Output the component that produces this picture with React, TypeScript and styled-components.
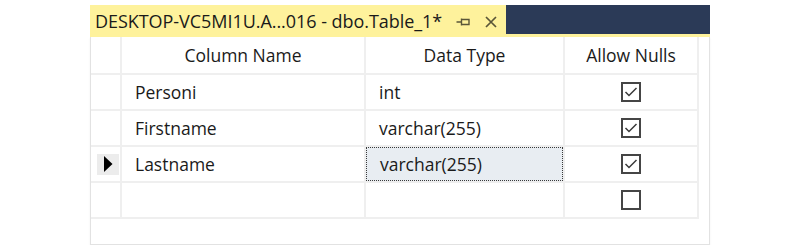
import React from 'react';
import styled, { createGlobalStyle } from 'styled-components';

const GlobalStyle = createGlobalStyle`
  body {
    margin: 0;
    background: #ffffff;
    font-family: "Open Sans", "Noto Sans", sans-serif;
    color: #1a1a1a;
  }
`;

const Frame = styled.div`
  width: 620px;
  margin: 5px 0 0 90px;
`;

const TabStrip = styled.div`
  display: flex;
  height: 29px;
  background: #2b3a57;
  border-bottom: 3px solid #fef29c;
`;

const Tab = styled.div`
  display: flex;
  align-items: center;
  width: 416px;
  height: 32px;
  box-sizing: border-box;
  padding-left: 5px;
  background: #fef29c;
  font-size: 18px;
  white-space: nowrap;
`;

const TabTitle = styled.span`
  letter-spacing: -0.05px;
`;

const TabButton = styled.span<{ $gap: number }>`
  display: inline-flex;
  margin-left: ${p => p.$gap}px;
  margin-top: 2px;
`;

const Panel = styled.div`
  border: 1px solid #e2e2e2;
  border-top: none;
  box-shadow: 0 1px 2px rgba(0, 0, 0, 0.06);
  padding: 0 12px 25px 0;
  background: #fff;
`;

const Grid = styled.div`
  display: grid;
  grid-template-columns: 29px 242px 197px 132px;
  grid-template-rows: 36px;
  grid-auto-rows: 34px;
  gap: 2px;
  padding: 0 2px 2px 0;
  background: #efefef;
  width: max-content;
`;

const HeaderCell = styled.div`
  display: flex;
  align-items: center;
  justify-content: center;
  background: #fff;
  font-size: 17.5px;
`;

const Cell = styled.div<{ $selected?: boolean; $center?: boolean }>`
  display: flex;
  align-items: center;
  justify-content: ${p => (p.$center ? 'center' : 'flex-start')};
  box-sizing: border-box;
  padding-left: ${p => (p.$center ? 0 : 13)}px;
  background: ${p => (p.$selected ? '#e8edf2' : '#fff')};
  border: ${p => (p.$selected ? '1px dotted #3a3a3a' : 'none')};
  font-size: 17.5px;
  white-space: nowrap;
`;

const SelectorCell = styled.div`
  display: flex;
  align-items: center;
  justify-content: center;
  background: #fff;
`;

const Marker = styled.div`
  display: flex;
  align-items: center;
  justify-content: center;
  width: 22px;
  height: 21px;
  margin-left: 4px;
  background: #ececec;
`;

const Box = styled.span`
  display: inline-flex;
  align-items: center;
  justify-content: center;
  width: 20px;
  height: 20px;
  box-sizing: border-box;
  border: 2px solid #454545;
  background: #fff;
`;

const Check = ({ checked }: { checked: boolean }) => (
  <Box>
    {checked && (
      <svg width="14" height="12" viewBox="0 0 14 12">
        <path d="M1.5 6 L5 9.5 L12.5 2" fill="none" stroke="#3a3a3a" strokeWidth="1.5" />
      </svg>
    )}
  </Box>
);

const rows = [
  { name: 'Personi', type: 'int', nulls: true },
  { name: 'Firstname', type: 'varchar(255)', nulls: true },
  { name: 'Lastname', type: 'varchar(255)', nulls: true, current: true },
];

export default function App() {
  return (
    <>
      <GlobalStyle />
      <Frame>
        <TabStrip>
          <Tab>
            <TabTitle>DESKTOP-VC5MI1U.A...016 - dbo.Table_1*</TabTitle>
            <TabButton $gap={14}>
              <svg width="14" height="10" viewBox="0 0 14 10">
                <path d="M0.5 5 H5 M5.5 1.5 V8.5 M5.5 2.5 H13 V7.5 H5.5" fill="none" stroke="#5a5638" strokeWidth="1.4" />
              </svg>
            </TabButton>
            <TabButton $gap={15}>
              <svg width="12" height="12" viewBox="0 0 12 12">
                <path d="M1 1 L11 11 M11 1 L1 11" fill="none" stroke="#5a5638" strokeWidth="1.7" />
              </svg>
            </TabButton>
          </Tab>
        </TabStrip>
        <Panel>
          <Grid>
            <HeaderCell />
            <HeaderCell>Column Name</HeaderCell>
            <HeaderCell>Data Type</HeaderCell>
            <HeaderCell>Allow Nulls</HeaderCell>
            {rows.map(r => (
              <React.Fragment key={r.name}>
                <SelectorCell>
                  {r.current && (
                    <Marker>
                      <svg width="10" height="16" viewBox="0 0 10 16">
                        <path d="M1 0 L9.5 8 L1 16 Z" fill="#000" />
                      </svg>
                    </Marker>
                  )}
                </SelectorCell>
                <Cell>{r.name}</Cell>
                <Cell $selected={r.current}>{r.type}</Cell>
                <Cell $center>
                  <Check checked={r.nulls} />
                </Cell>
              </React.Fragment>
            ))}
            <SelectorCell />
            <Cell />
            <Cell />
            <Cell $center>
              <Check checked={false} />
            </Cell>
          </Grid>
        </Panel>
      </Frame>
    </>
  );
}
